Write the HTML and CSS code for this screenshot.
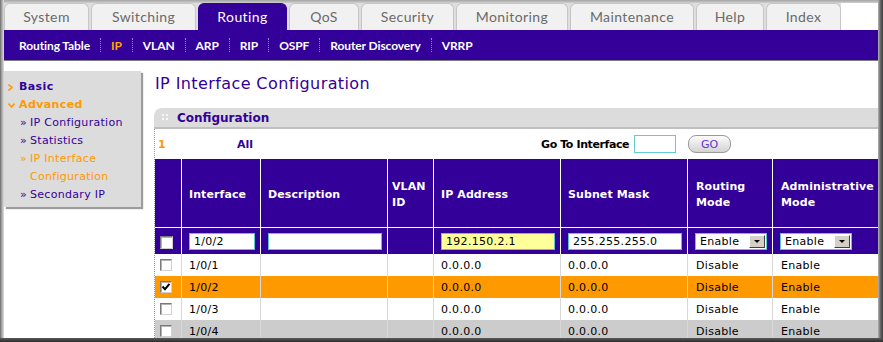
FILE: index.html
```html
<!DOCTYPE html>
<html>
<head>
<meta charset="utf-8">
<title>IP Interface Configuration</title>
<link rel="stylesheet" href="styles.css">
</head>
<body>
<div class="frame">
  <nav class="tabs">
    <span class="tab t-system">System</span>
    <span class="tab t-switching">Switching</span>
    <span class="tab t-routing active">Routing</span>
    <span class="tab t-qos">QoS</span>
    <span class="tab t-security">Security</span>
    <span class="tab t-monitoring">Monitoring</span>
    <span class="tab t-maint">Maintenance</span>
    <span class="tab t-help">Help</span>
    <span class="tab t-index">Index</span>
    <span class="tab-fill"></span>
  </nav>
  <nav class="subnav">
    <span>Routing Table</span><i class="sep"></i>
    <span class="on">IP</span><i class="sep"></i>
    <span>VLAN</span><i class="sep"></i>
    <span>ARP</span><i class="sep"></i>
    <span>RIP</span><i class="sep"></i>
    <span>OSPF</span><i class="sep"></i>
    <span>Router Discovery</span><i class="sep"></i>
    <span>VRRP</span>
  </nav>
  <div class="page">
    <aside class="side">
      <div class="grp"><svg class="chev" width="5" height="7" viewBox="0 0 5 7"><path d="M0.5 0.5 L4 3.5 L0.5 6.5" fill="none" stroke="#ff9900" stroke-width="1.6"/></svg>Basic</div>
      <div class="grp open"><svg class="chev" width="7" height="5" viewBox="0 0 7 5"><path d="M0.5 0.5 L3.5 4 L6.5 0.5" fill="none" stroke="#ff9900" stroke-width="1.6"/></svg>Advanced</div>
      <ul class="sub">
        <li><span class="raq">»</span><span>IP Configuration</span></li>
        <li><span class="raq">»</span><span>Statistics</span></li>
        <li class="on"><span class="raq">»</span><span>IP Interface Configuration</span></li>
        <li><span class="raq">»</span><span>Secondary IP</span></li>
      </ul>
    </aside>
    <main class="main">
      <h1 class="title">IP Interface Configuration</h1>
      <section class="cfg">
        <div class="cfg-head">
          <svg class="dots" width="7" height="7" viewBox="0 0 7 7"><rect x="0" y="0" width="2" height="2" fill="#f6f6f6"/><rect x="4" y="0" width="2" height="2" fill="#f6f6f6"/><rect x="0" y="4" width="2" height="2" fill="#f6f6f6"/><rect x="4" y="4" width="2" height="2" fill="#f6f6f6"/></svg>
          <span>Configuration</span>
        </div>
        <div class="cfg-body">
          <div class="bar">
            <span class="num">1</span>
            <span class="all">All</span>
            <span class="go-l">Go To Interface</span>
            <span class="go-in"></span>
            <span class="go-btn">GO</span>
          </div>
          <table class="grid">
            <thead>
              <tr>
                <th class="c0"></th>
                <th class="c1">Interface</th>
                <th class="c2">Description</th>
                <th class="c3">VLAN ID</th>
                <th class="c4">IP Address</th>
                <th class="c5">Subnet Mask</th>
                <th class="c6">Routing Mode</th>
                <th class="c7">Administrative Mode</th>
              </tr>
            </thead>
            <tbody>
              <tr class="edit">
                <td class="cbcell"><span class="cb"></span></td>
                <td><span class="fld w-if">1/0/2</span></td>
                <td><span class="fld w-wide"></span></td>
                <td></td>
                <td><span class="fld w-wide ip">192.150.2.1</span></td>
                <td><span class="fld w-wide">255.255.255.0</span></td>
                <td><span class="sel"><span class="sel-t">Enable</span><span class="sel-b"></span></span></td>
                <td><span class="sel"><span class="sel-t">Enable</span><span class="sel-b"></span></span></td>
              </tr>
              <tr class="r-white">
                <td class="cbcell"><span class="cb"></span></td>
                <td>1/0/1</td><td></td><td></td><td>0.0.0.0</td><td>0.0.0.0</td><td>Disable</td><td>Enable</td>
              </tr>
              <tr class="r-sel">
                <td class="cbcell"><span class="cb"><svg width="10" height="10" viewBox="0 0 10 10"><path d="M1.5 4.5 L4 7.2 L8.5 1.8" fill="none" stroke="#000" stroke-width="2"/></svg></span></td>
                <td>1/0/2</td><td></td><td></td><td>0.0.0.0</td><td>0.0.0.0</td><td>Disable</td><td>Enable</td>
              </tr>
              <tr class="r-white">
                <td class="cbcell"><span class="cb"></span></td>
                <td>1/0/3</td><td></td><td></td><td>0.0.0.0</td><td>0.0.0.0</td><td>Disable</td><td>Enable</td>
              </tr>
              <tr class="r-gray">
                <td class="cbcell"><span class="cb"></span></td>
                <td>1/0/4</td><td></td><td></td><td>0.0.0.0</td><td>0.0.0.0</td><td>Disable</td><td>Enable</td>
              </tr>
            </tbody>
          </table>
        </div>
      </section>
    </main>
  </div>
  <div class="shade-l"></div>
  <div class="shade-r"></div>
  <div class="shade-b"></div>
</div>
</body>
</html>
```
FILE: styles.css
```css
* { box-sizing: border-box; }
html, body { margin: 0; padding: 0; background: #fff; }
body { font-family: "DejaVu Sans", Verdana, sans-serif; font-size: 11px; color: #000; letter-spacing: 0.3px; }

.frame { position: relative; width: 883px; height: 342px; overflow: hidden; background: #fff; }

/* top tabs */
.tabs {
  display: flex; height: 30px; padding: 3px 0 0 4px; gap: 2px;
  background: linear-gradient(#a4a4a4 0, #cfcfcf 3px, #dedede 3px, #dedede 100%);
}
.tab {
  flex: none; display: flex; align-items: center; justify-content: center;
  height: 27px; padding-bottom: 1px; background: #f1f1f1; color: #6a6a6a;
  border: 1px solid #c6c6c6; border-bottom: 0; border-radius: 6px 6px 0 0;
  font-family: Lato, "DejaVu Sans", sans-serif; font-size: 14px; letter-spacing: 0.4px;
}
.tab.active { background: #330099; border-color: #330099; color: #fff; }
.t-system { width: 85px; }
.t-switching { width: 105px; }
.t-routing { width: 89px; }
.t-qos { width: 70px; }
.t-security { width: 93px; }
.t-monitoring { width: 112px; }
.t-maint { width: 124px; }
.t-help { width: 68px; }
.t-index { width: 75px; }
.tab-fill { flex: 1; background: #fff; margin-left: -2px; }

/* sub navigation */
.subnav {
  display: flex; align-items: center; gap: 10px;
  height: 31px; padding-left: 19px;
  background: #330099; border-bottom: 1px solid #7c7c7c;
  font-family: Lato, "DejaVu Sans", sans-serif; font-weight: bold; font-size: 12px; color: #fff; letter-spacing: -0.1px;
}
.subnav .on { color: #ffa800; }
.sep { display: block; width: 0; height: 14px; border-left: 1px dotted #8f84c8; }

/* page */
.page { display: flex; padding: 10px 0 0 4px; }

.side {
  flex: none; width: 137px; height: 136px; padding: 7px 0 4px 0;
  background: #dcdcdc; box-shadow: 2px 2px 1px #9c9c9c;
  line-height: 18px; color: #330099;
}
.grp { display: flex; align-items: center; padding-left: 4px; font-weight: bold; letter-spacing: 0.4px; }
.grp .chev { flex: none; margin: 0 6px 0 0; }
.grp.open { color: #ff9900; }
.grp.open .chev { margin-right: 4px; }
.sub { list-style: none; margin: 0; padding: 0; }
.sub li { display: flex; }
.sub .raq { flex: none; width: 10px; margin-left: 16px; }
.sub li.on { color: #ff9900; }

.main { flex: none; width: 740px; margin-left: 13px; }
.title { margin: 3px 0 14px 1px; font-size: 16px; line-height: 20px; font-weight: normal; color: #330099; letter-spacing: 0.4px; }

.cfg-head {
  display: flex; align-items: center; gap: 8px;
  height: 21px; padding-left: 8px;
  background: #dcdcdc; border-bottom: 2px solid #bfbfbf; border-top-left-radius: 8px;
  color: #330099; font-weight: bold; font-size: 12px; letter-spacing: 0;
}
.cfg-body { border-left: 1px dotted #9a9a9a; }

.bar { display: flex; align-items: center; height: 30px; padding-left: 3px; font-weight: bold; letter-spacing: 0; }
.bar .num { flex: none; width: 79px; color: #ff9900; }
.bar .all { flex: none; width: 304px; color: #330099; }
.bar .go-l { flex: none; width: 93px; white-space: nowrap; letter-spacing: -0.4px; }
.bar .go-in { flex: none; width: 42px; height: 18px; border: 1px solid #66cccc; background: #fff; }
.bar .go-btn {
  flex: none; display: flex; align-items: center; justify-content: center;
  width: 43px; height: 18px; margin-left: 12px;
  border: 1px solid #9a9a9a; border-radius: 8px;
  background: linear-gradient(#fcfcfc, #d2d2d2);
  color: #6633cc; font-weight: normal;
}

/* table */
.grid { border-collapse: separate; border-spacing: 0; table-layout: fixed; width: 738px; }
.grid th, .grid td { padding: 0 0 0 7px; text-align: left; vertical-align: middle; white-space: nowrap; overflow: hidden; }
.grid th {
  height: 68px; padding-top: 4px; background: #330099; color: #fff; font-weight: bold;
  line-height: 16px; white-space: normal; border-left: 1px solid #fff; letter-spacing: 0.1px;
}
.grid th.c0 { border-left: 0; }
.c0 { width: 26px; }
.c1 { width: 79px; }
.c2 { width: 127px; }
.c3 { width: 46px; }
.grid th.c3 { padding-left: 4px; }
.c4 { width: 127px; }
.c5 { width: 127px; }
.c6 { width: 85px; }
.c7 { width: 121px; }
.grid th.c6, .grid th.c7 { padding-left: 8px; }

.grid td { height: 22px; border-left: 1px solid #d8d8d8; }
.grid td.cbcell { border-left: 0; padding-left: 5px; }
.grid td:nth-child(7), .grid td:nth-child(8) { padding-left: 8px; }

.edit td { height: 27px; background: #330099; border-top: 1px solid #fff; border-left: 1px solid #fff; }
.edit td:nth-child(7), .edit td:nth-child(8) { padding-left: 7px; }
.r-white td { background: #fff; }
.r-sel td { background: #ff9900; }
.r-gray td { background: #cccccc; }

.cb {
  display: flex; align-items: center; justify-content: center;
  width: 12px; height: 12px; background: #fff;
  border: 1px solid; border-color: #7a7a7a #d0d0d0 #d0d0d0 #7a7a7a;
  box-shadow: inset 1px 1px 0 #b4b4b4;
}
.edit .cb { width: 13px; height: 13px; margin-top: 2px; }

.fld {
  display: block; height: 17px; margin-top: 1px; padding-left: 4px;
  border: 1px solid #5cc6c6; background: #fff; line-height: 15px; color: #000;
}
.w-if { width: 66px; }
.w-wide { width: 114px; }
.fld.ip { background: #ffff99; }

.sel {
  display: flex; align-items: center; justify-content: space-between;
  width: 72px; height: 17px; margin-top: 1px; padding: 0 1px 0 4px;
  border: 1px solid #5cc6c6; background: #fff; color: #000; line-height: 15px;
}
.sel-b {
  flex: none; width: 16px; height: 13px;
  background: #d4d0c8; border: 1px solid; border-color: #fff #404040 #404040 #fff;
  display: flex; align-items: center; justify-content: center;
}
.sel-b::after {
  content: ""; width: 0; height: 0;
  border-left: 3px solid transparent; border-right: 3px solid transparent; border-top: 3px solid #000;
}

/* frame shading overlays */
.shade-l { position: absolute; left: 0; top: 0; bottom: 0; width: 4px; background: linear-gradient(to right, #6c6c6c, #a6a6a6 45%, #e0e0e0); }
.shade-r { position: absolute; right: 0; top: 0; bottom: 0; width: 5px; background: linear-gradient(to right, #b4b4b4, #6c6c6c 45%, #3c3c3c); }
.shade-b { position: absolute; left: 0; right: 0; bottom: 0; height: 4px; background: linear-gradient(#5a5a5a, #2c2c2c); }
```
